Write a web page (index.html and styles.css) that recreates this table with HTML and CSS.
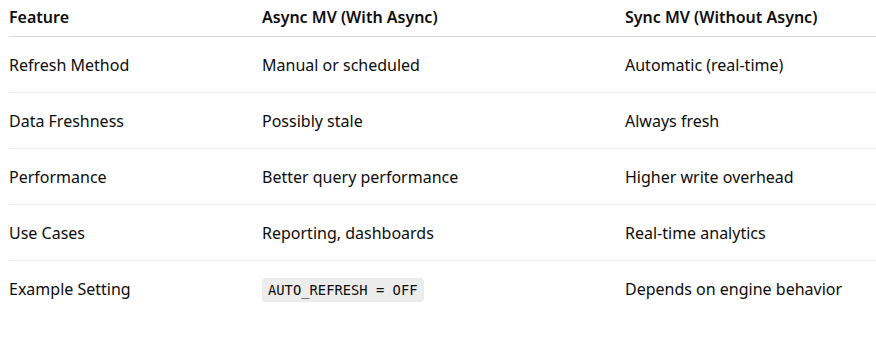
FILE: index.html
```html
<!DOCTYPE html>
<html lang="en">
<head>
    <meta charset="UTF-8">
    <title>Async vs Sync MV</title>
    <link rel="stylesheet" href="styles.css">
</head>
<body>
    <div class="table-wrap">
        <table class="compare">
            <thead>
                <tr>
                    <th class="col-feature">Feature</th>
                    <th class="col-async">Async MV (With Async)</th>
                    <th class="col-sync">Sync MV (Without Async)</th>
                </tr>
            </thead>
            <tbody>
                <tr>
                    <td>Refresh Method</td>
                    <td>Manual or scheduled</td>
                    <td>Automatic (real-time)</td>
                </tr>
                <tr>
                    <td>Data Freshness</td>
                    <td>Possibly stale</td>
                    <td>Always fresh</td>
                </tr>
                <tr>
                    <td>Performance</td>
                    <td>Better query performance</td>
                    <td>Higher write overhead</td>
                </tr>
                <tr>
                    <td>Use Cases</td>
                    <td>Reporting, dashboards</td>
                    <td>Real-time analytics</td>
                </tr>
                <tr>
                    <td>Example Setting</td>
                    <td><code class="inline-code">AUTO_REFRESH = OFF</code></td>
                    <td>Depends on engine behavior</td>
                </tr>
            </tbody>
        </table>
    </div>
</body>
</html>
```

FILE: styles.css
```css
* {
    margin: 0;
    padding: 0;
    box-sizing: border-box;
}

body {
    font-family: "Noto Sans", "Open Sans", sans-serif;
    font-size: 16px;
    color: #0d0d0d;
    background: #ffffff;
    padding-left: 9px;
}

.compare {
    width: 867px;
    border-collapse: collapse;
    text-align: left;
}

.col-feature {
    width: 253px;
}

.col-async {
    width: 363px;
}

.compare th {
    font-weight: 600;
    height: 36px;
    padding-bottom: 2px;
    border-bottom: 1px solid #d9d9d9;
}

.compare td {
    height: 56px;
    padding-top: 2px;
    border-bottom: 1px solid #f0f0f0;
}

.compare tbody tr:last-child td {
    border-bottom: none;
}

.inline-code {
    font-family: "DejaVu Sans Mono", "Liberation Mono", monospace;
    font-size: 13.8px;
    background: #ececec;
    border-radius: 4px;
    padding: 4px 6px;
}
```
